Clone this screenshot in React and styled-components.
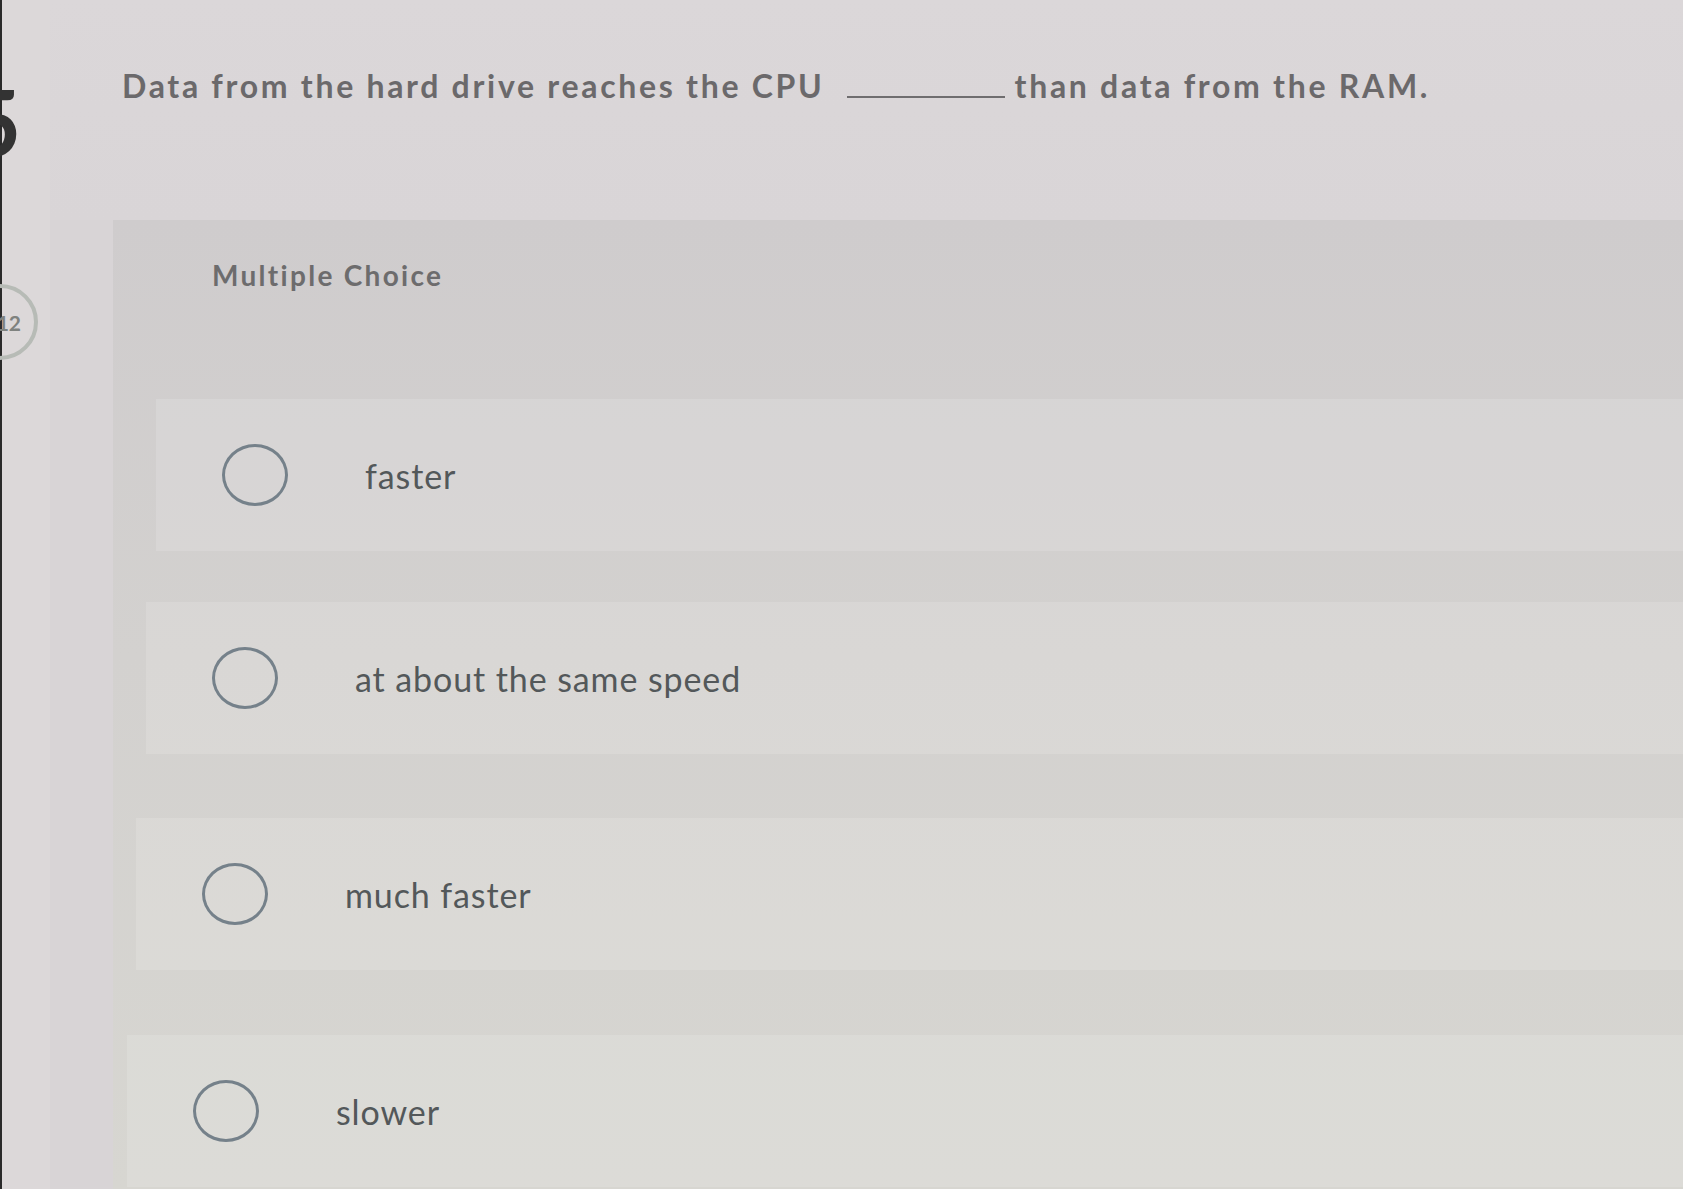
import React from 'react';
import styled, { createGlobalStyle } from 'styled-components';

const GlobalStyle = createGlobalStyle`
  html, body {
    margin: 0;
    padding: 0;
    background: #d8d4d6;
  }
  body {
    font-family: Lato, "Open Sans", "Liberation Sans", sans-serif;
  }
`;

const choices = [
  { id: 'a', label: 'faster', indent: 43, gap: 0 },
  { id: 'b', label: 'at about the same speed', indent: 33, gap: 51 },
  { id: 'c', label: 'much faster', indent: 23, gap: 64 },
  { id: 'd', label: 'slower', indent: 14, gap: 65 },
];

const Page = styled.div`
  display: flex;
  width: 1683px;
  height: 1189px;
  overflow: hidden;
`;

const Sidebar = styled.aside`
  position: relative;
  flex: 0 0 50px;
  background: #dcd8d9;
  border-left: 2px solid #2a2a2a;
  box-sizing: border-box;
`;

const BigDigit = styled.span`
  position: absolute;
  left: -34px;
  top: 76px;
  font-size: 92px;
  font-weight: 700;
  color: #333;
  line-height: 1;
`;

const StepBadge = styled.span`
  position: absolute;
  left: -40px;
  top: 284px;
  width: 76px;
  height: 76px;
  border: 4px solid #b7bbb6;
  border-radius: 50%;
  box-sizing: border-box;
  display: flex;
  align-items: center;
  justify-content: flex-end;
  padding-right: 13px;
  font-size: 21px;
  font-weight: 700;
  color: #7f827f;
`;

const Main = styled.main`
  flex: 1;
  display: flex;
  flex-direction: column;
`;

const Header = styled.header`
  height: 220px;
  box-sizing: border-box;
  padding: 66px 0 0 72px;
  background: linear-gradient(180deg, #dbd7d9 0%, #d9d5d7 100%);
`;

const Question = styled.p`
  margin: 0;
  font-size: 32px;
  font-weight: 700;
  letter-spacing: 2.7px;
  color: #6b696b;
  line-height: 40px;
`;

const Blank = styled.span`
  display: inline-block;
  width: 158px;
  height: 26px;
  margin: 0 10px 0 22px;
  border-bottom: 2px solid #6f6d6f;
  vertical-align: baseline;
`;

const Panel = styled.section`
  flex: 1;
  margin-left: 63px;
  padding: 40px 0 0 0;
  background: linear-gradient(180deg, #cfcccd 0%, #d3d1cf 45%, #d7d6d1 100%);
`;

const PanelTitle = styled.h2`
  margin: 0 0 0 99px;
  font-size: 28px;
  font-weight: 700;
  letter-spacing: 2.3px;
  color: #6d6c6d;
  line-height: 30px;
`;

const ChoiceList = styled.ul`
  list-style: none;
  margin: 109px 0 0 0;
  padding: 0;
  display: flex;
  flex-direction: column;
`;

const Choice = styled.li`
  display: flex;
  align-items: center;
  height: 152px;
  margin-top: ${(p) => p.$gap}px;
  margin-left: ${(p) => p.$indent}px;
  background: rgba(255, 255, 255, 0.14);
`;

const Radio = styled.span`
  flex: 0 0 auto;
  width: 66px;
  height: 62px;
  margin-left: 66px;
  border: 3px solid #75818a;
  border-radius: 50%;
  box-sizing: border-box;
`;

const ChoiceText = styled.span`
  margin-left: 77px;
  font-size: 34px;
  font-weight: 400;
  letter-spacing: 0.9px;
  color: #53585a;
`;

export default function App() {
  return (
    <>
      <GlobalStyle />
      <Page>
        <Sidebar>
          <BigDigit>5</BigDigit>
          <StepBadge>12</StepBadge>
        </Sidebar>
        <Main>
          <Header>
            <Question>
              Data from the hard drive reaches the CPU<Blank />than data from the RAM.
            </Question>
          </Header>
          <Panel>
            <PanelTitle>Multiple Choice</PanelTitle>
            <ChoiceList>
              {choices.map((c) => (
                <Choice key={c.id} $indent={c.indent} $gap={c.gap}>
                  <Radio />
                  <ChoiceText>{c.label}</ChoiceText>
                </Choice>
              ))}
            </ChoiceList>
          </Panel>
        </Main>
      </Page>
    </>
  );
}
